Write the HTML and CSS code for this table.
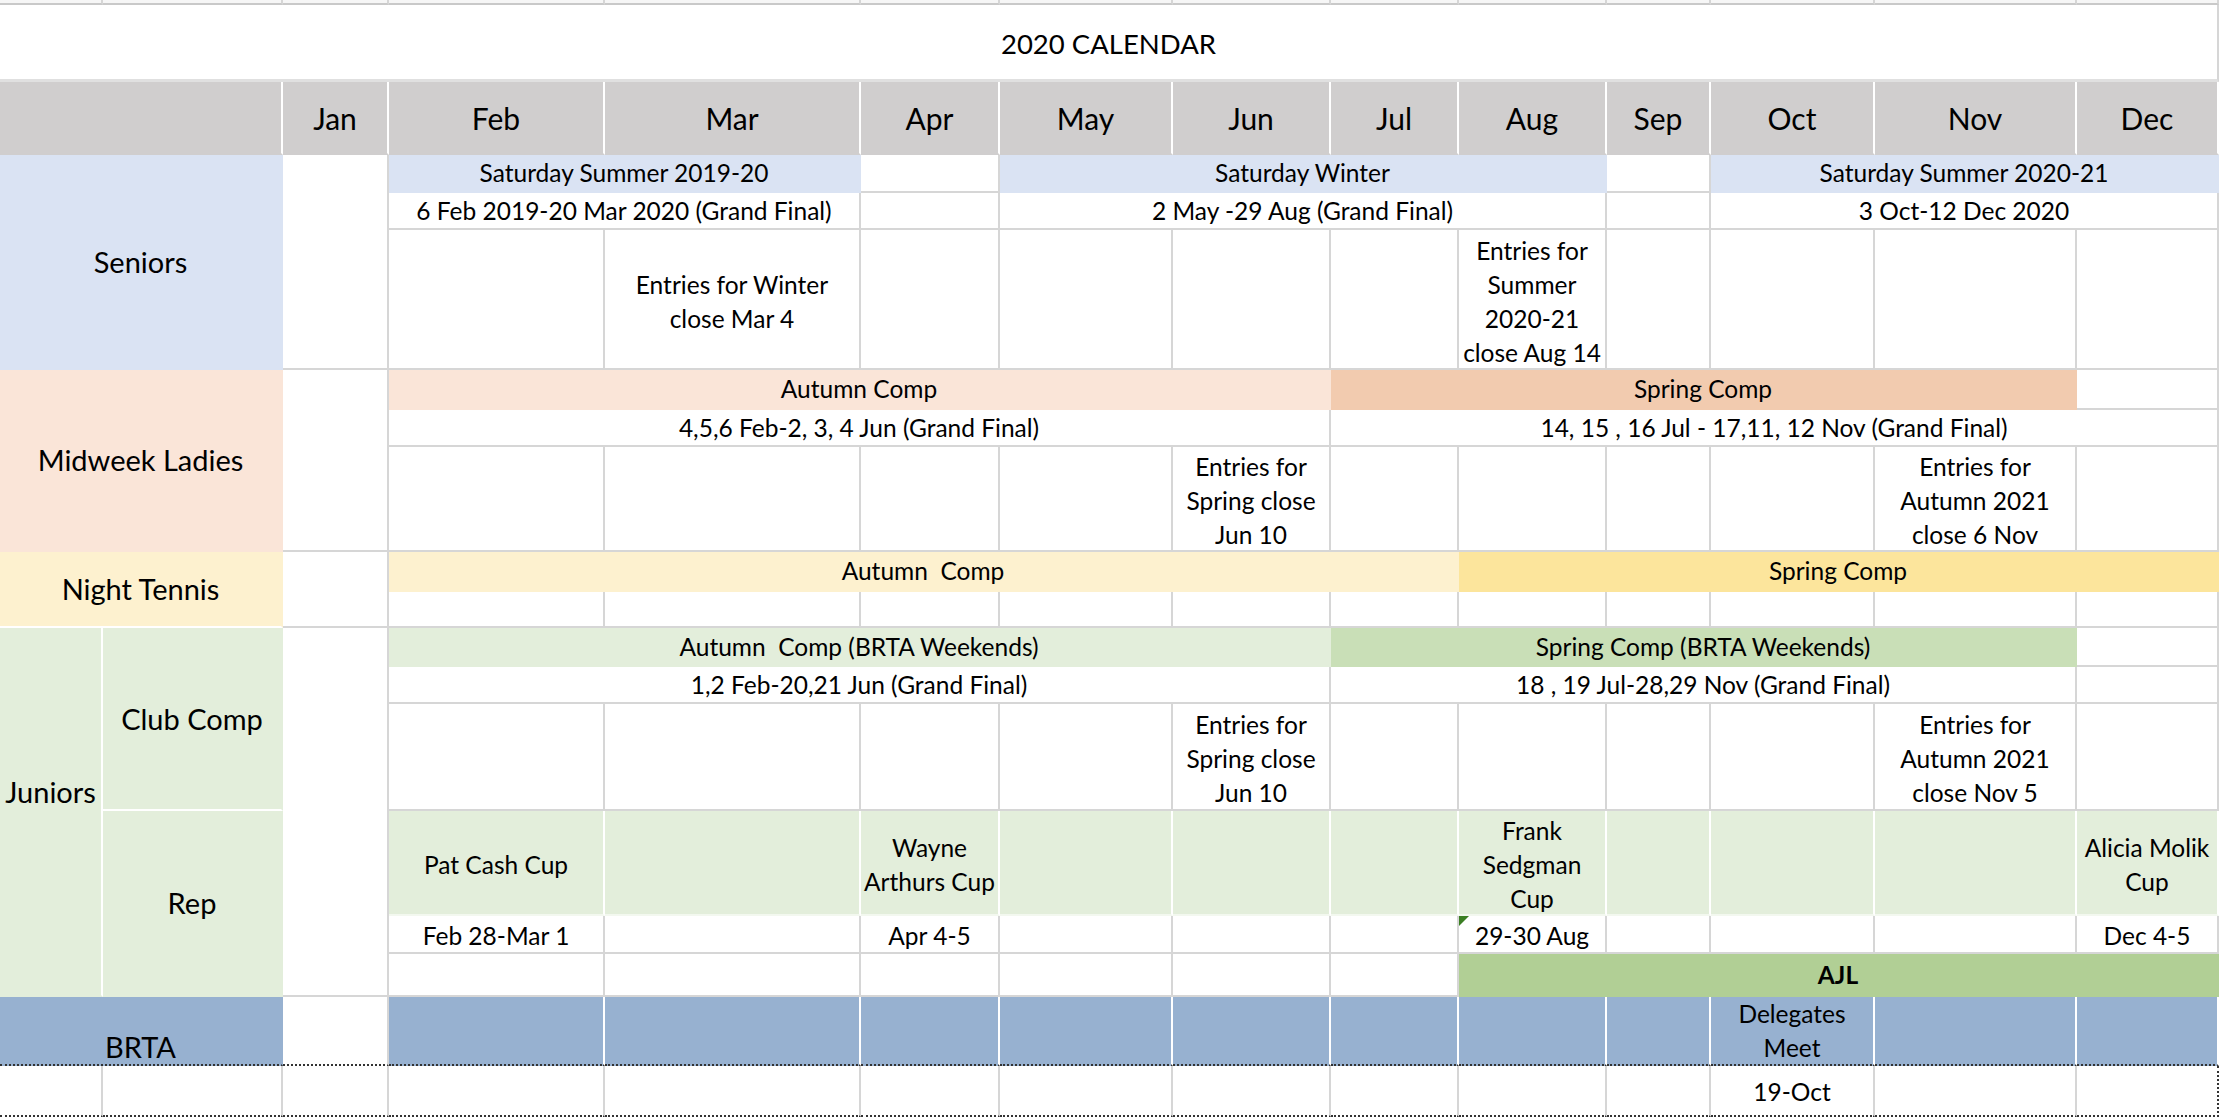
FILE: index.html
```html
<!DOCTYPE html>
<html lang="en">
<head>
<meta charset="utf-8">
<title>2020 Calendar</title>
<link rel="stylesheet" href="styles.css">
</head>
<body>
<div class="sheet">
  <!-- top strip -->
  <div class="c strip"></div><div class="c strip"></div><div class="c strip"></div><div class="c strip"></div><div class="c strip"></div><div class="c strip"></div><div class="c strip"></div><div class="c strip"></div><div class="c strip"></div><div class="c strip"></div><div class="c strip"></div><div class="c strip"></div><div class="c strip"></div><div class="c strip"></div>

  <!-- title -->
  <div class="c title s14">2020 CALENDAR</div>

  <!-- header -->
  <div class="c hd s2"></div>
  <div class="c hd">Jan</div>
  <div class="c hd">Feb</div>
  <div class="c hd">Mar</div>
  <div class="c hd">Apr</div>
  <div class="c hd">May</div>
  <div class="c hd">Jun</div>
  <div class="c hd">Jul</div>
  <div class="c hd">Aug</div>
  <div class="c hd">Sep</div>
  <div class="c hd">Oct</div>
  <div class="c hd">Nov</div>
  <div class="c hd">Dec</div>

  <!-- Seniors -->
  <div class="c lbl blue fill s2 r3">Seniors</div>
  <div class="c r3"></div>
  <div class="c blue fill s2">Saturday Summer 2019-20</div>
  <div class="c"></div>
  <div class="c blue fill s4">Saturday Winter</div>
  <div class="c"></div>
  <div class="c blue fill s3">Saturday Summer 2020-21</div>

  <div class="c s2">6 Feb 2019-20 Mar 2020 (Grand Final)</div>
  <div class="c"></div>
  <div class="c s4">2 May -29 Aug (Grand Final)</div>
  <div class="c"></div>
  <div class="c s3">3 Oct-12 Dec 2020</div>

  <div class="c"></div>
  <div class="c ml">Entries for Winter<br>close Mar 4</div>
  <div class="c"></div>
  <div class="c"></div>
  <div class="c"></div>
  <div class="c"></div>
  <div class="c ml">Entries for<br>Summer<br>2020-21<br>close Aug 14</div>
  <div class="c"></div>
  <div class="c"></div>
  <div class="c"></div>
  <div class="c"></div>

  <!-- Midweek Ladies -->
  <div class="c lbl peach fill s2 r3">Midweek Ladies</div>
  <div class="c r3"></div>
  <div class="c peach fill s5">Autumn Comp</div>
  <div class="c peach2 fill s5">Spring Comp</div>
  <div class="c"></div>

  <div class="c s5">4,5,6 Feb-2, 3, 4 Jun (Grand Final)</div>
  <div class="c s6">14, 15 , 16 Jul - 17,11, 12 Nov (Grand Final)</div>

  <div class="c"></div>
  <div class="c"></div>
  <div class="c"></div>
  <div class="c"></div>
  <div class="c ml">Entries for<br>Spring close<br>Jun 10</div>
  <div class="c"></div>
  <div class="c"></div>
  <div class="c"></div>
  <div class="c"></div>
  <div class="c ml">Entries for<br>Autumn 2021<br>close 6 Nov</div>
  <div class="c"></div>

  <!-- Night Tennis -->
  <div class="c lbl yel fill wbot s2 r2">Night Tennis</div>
  <div class="c r2"></div>
  <div class="c yel fill s6">Autumn&nbsp; Comp</div>
  <div class="c yel2 fill s5">Spring Comp</div>

  <div class="c"></div>
  <div class="c"></div>
  <div class="c"></div>
  <div class="c"></div>
  <div class="c"></div>
  <div class="c"></div>
  <div class="c"></div>
  <div class="c"></div>
  <div class="c"></div>
  <div class="c"></div>
  <div class="c"></div>

  <!-- Juniors -->
  <div class="c lbl grn fill wright juniors r6">Juniors</div>
  <div class="c lbl grn fill wbot r3">Club Comp</div>
  <div class="c r6"></div>
  <div class="c grn fill s5">Autumn&nbsp; Comp (BRTA Weekends)</div>
  <div class="c grn2 fill s5">Spring Comp (BRTA Weekends)</div>
  <div class="c"></div>

  <div class="c s5">1,2 Feb-20,21 Jun (Grand Final)</div>
  <div class="c s5">18 , 19 Jul-28,29 Nov (Grand Final)</div>
  <div class="c"></div>

  <div class="c"></div>
  <div class="c"></div>
  <div class="c"></div>
  <div class="c"></div>
  <div class="c ml">Entries for<br>Spring close<br>Jun 10</div>
  <div class="c"></div>
  <div class="c"></div>
  <div class="c"></div>
  <div class="c"></div>
  <div class="c ml">Entries for<br>Autumn 2021<br>close Nov 5</div>
  <div class="c"></div>

  <!-- Rep -->
  <div class="c lbl grn fill r3">Rep</div>
  <div class="c grn rep ml">Pat Cash Cup</div>
  <div class="c grn rep"></div>
  <div class="c grn rep ml">Wayne<br>Arthurs Cup</div>
  <div class="c grn rep"></div>
  <div class="c grn rep"></div>
  <div class="c grn rep"></div>
  <div class="c grn rep ml">Frank<br>Sedgman<br>Cup</div>
  <div class="c grn rep"></div>
  <div class="c grn rep"></div>
  <div class="c grn rep"></div>
  <div class="c grn rep ml">Alicia Molik<br>Cup</div>

  <div class="c sl">Feb 28-Mar 1</div>
  <div class="c"></div>
  <div class="c sl">Apr 4-5</div>
  <div class="c"></div>
  <div class="c"></div>
  <div class="c"></div>
  <div class="c note sl">29-30 Aug</div>
  <div class="c"></div>
  <div class="c"></div>
  <div class="c"></div>
  <div class="c sl">Dec 4-5</div>

  <div class="c"></div>
  <div class="c"></div>
  <div class="c"></div>
  <div class="c"></div>
  <div class="c"></div>
  <div class="c"></div>
  <div class="c ajl fill s5">AJL</div>

  <!-- BRTA -->
  <div class="c lbl brta fill brow brta-lbl s2">BRTA</div>
  <div class="c brow"></div>
  <div class="c brta brow wsep"></div>
  <div class="c brta brow wsep"></div>
  <div class="c brta brow wsep"></div>
  <div class="c brta brow wsep"></div>
  <div class="c brta brow wsep"></div>
  <div class="c brta brow wsep"></div>
  <div class="c brta brow wsep"></div>
  <div class="c brta brow wsep"></div>
  <div class="c brta brow wsep">Delegates<br>Meet</div>
  <div class="c brta brow wsep"></div>
  <div class="c brta brow wsep"></div>

  <!-- last row -->
  <div class="c last"></div>
  <div class="c last"></div>
  <div class="c last"></div>
  <div class="c last"></div>
  <div class="c last"></div>
  <div class="c last"></div>
  <div class="c last"></div>
  <div class="c last"></div>
  <div class="c last"></div>
  <div class="c last"></div>
  <div class="c last"></div>
  <div class="c last sl">19-Oct</div>
  <div class="c last"></div>
  <div class="c last end"></div>
</div>
</body>
</html>
```

FILE: styles.css
```css
* { box-sizing: border-box; }

html, body {
  margin: 0;
  padding: 0;
  background: #ffffff;
}

body {
  font-family: Lato, "Liberation Sans", sans-serif;
  color: #000;
}

.sheet {
  display: grid;
  width: 2219px;
  grid-template-columns: 103px 180px 106px 216px 256px 139px 173px 158px 128px 148px 104px 164px 202px 142px;
  grid-template-rows: 5px 77px 73px 38px 37px 140px 40px 37px 105px 40px 36px 39px 37px 107px 105px 38px 43px 69px 51px;
  grid-auto-flow: row;
}

.c {
  position: relative;
  display: flex;
  align-items: center;
  justify-content: center;
  text-align: center;
  white-space: nowrap;
  font-size: 24.5px;
  line-height: 34px;
  border-right: 2px solid #d6d6d6;
  border-bottom: 2px solid #d6d6d6;
  background: #fff;
}

/* multi-line / lower set text */
.ml { padding-top: 5px; }
.sl { padding-top: 3px; }

/* spans */
.s2 { grid-column: span 2; }
.s3 { grid-column: span 3; }
.s4 { grid-column: span 4; }
.s5 { grid-column: span 5; }
.s6 { grid-column: span 6; }
.s14 { grid-column: span 14; }
.r2 { grid-row: span 2; }
.r3 { grid-row: span 3; }
.r6 { grid-row: span 6; }

/* top strip and title */
.strip {
  background: #f6f6f6;
  border-bottom-color: #c9c9c9;
}

.title {
  font-size: 27.5px;
  border-bottom: 3px solid #e0e0e0;
  padding-top: 3px;
}

/* header */
.hd {
  background: #d0cece;
  font-size: 30px;
  border-right-color: #ffffff;
  border-bottom-color: #d0cece;
}

/* labels */
.lbl { font-size: 29px; }

.juniors { padding-bottom: 40px; }

.brta-lbl {
  align-items: flex-end;
  padding-bottom: 0;
}

/* fills */
.fill {
  border-right-color: transparent;
  border-bottom-color: transparent;
}

.blue { background: #dae3f3; }
.peach { background: #fae5d8; }
.peach2 { background: #f2cbaf; }
.yel { background: #fdf1cf; }
.yel2 { background: #fce59c; }
.grn { background: #e3eedb; }
.grn2 { background: #c9dfb7; }
.brta { background: #97b1d0; }

.ajl {
  background: #b1cf95;
  font-weight: 700;
}

.wright { border-right-color: #ffffff; }
.wbot { border-bottom-color: #ffffff; }
.wsep { border-right-color: #ffffff; }

.rep {
  border-right-color: #ffffff;
  border-bottom-color: #f3f8ef;
}

/* comment marker */
.note::before {
  content: "";
  position: absolute;
  left: 0;
  top: 0;
  width: 0;
  height: 0;
  border-top: 10px solid #3b7e23;
  border-right: 10px solid transparent;
}

/* print area border */
.brow { border-bottom: 2px dotted #333; }
.last { border-bottom: 2px dotted #333; }
.end { border-right: 2px dotted #333; }
```
